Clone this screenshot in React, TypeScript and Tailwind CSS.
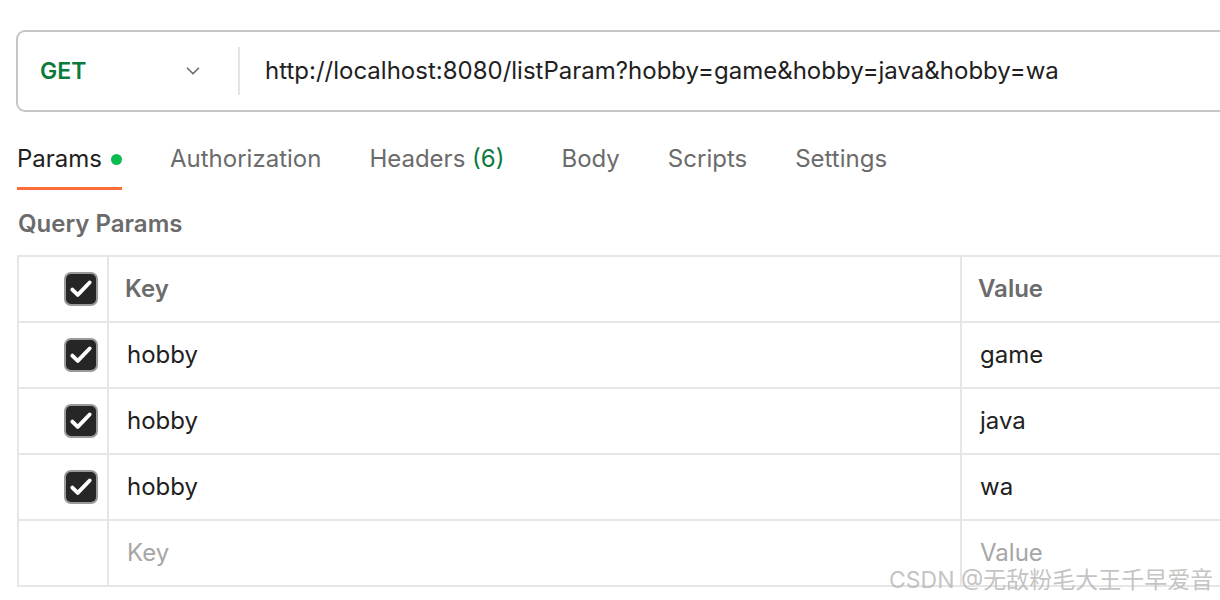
import { ChevronDown } from 'lucide-react';

const rows = [
  { key: 'hobby', value: 'game' },
  { key: 'hobby', value: 'java' },
  { key: 'hobby', value: 'wa' },
];

function Check() {
  return (
    <div className="w-[34px] h-[34px] rounded-[7px] bg-[#262626] border-2 border-[#9a9a9a] flex items-center justify-center">
      <svg width="26" height="26" viewBox="0 0 24 24" fill="none">
        <path d="M4 12.5l5 5L20 6" stroke="white" strokeWidth="3.6" strokeLinecap="round" strokeLinejoin="round" />
      </svg>
    </div>
  );
}

export default function App() {
  return (
    <div
      className="relative w-[1220px] h-[600px] bg-white overflow-hidden"
      style={{ fontFamily: 'Inter, "Noto Sans CJK SC", sans-serif' }}
    >
      {/* URL bar */}
      <div className="ml-[16px] mt-[30px] w-[1230px] h-[82px] border-2 border-[#c6c6c6] rounded-[9px] flex items-center">
        <div className="w-[220px] flex items-center justify-between pl-[22px] pr-[34px]">
          <span className="text-[23px] font-semibold text-[#0b7a3b]">GET</span>
          <ChevronDown className="w-[22px] h-[22px] text-[#6b6b6b]" strokeWidth={1.8} />
        </div>
        <div className="w-[2px] h-[48px] bg-[#e4e4e4]" />
        <span className="ml-[25px] text-[24px] text-[#212121]">
          http://localhost:8080/listParam?hobby=game&amp;hobby=java&amp;hobby=wa
        </span>
      </div>

      {/* Tabs */}
      <div className="flex items-start mt-[32px] ml-[17px] text-[24px] text-[#6b6b6b] leading-[30px]">
        <div className="flex flex-col w-[105px]">
          <div className="flex items-center gap-[9px] text-[#212121]">
            Params
            <span className="w-[11px] h-[11px] rounded-full bg-[#0cbb52]" />
          </div>
          <div className="mt-[13px] h-[3px] bg-[#ff6c37]" />
        </div>
        <span className="ml-[48px]">Authorization</span>
        <span className="ml-[48px]">
          Headers <span className="text-[#0b7a3b]">(6)</span>
        </span>
        <span className="ml-[57px]">Body</span>
        <span className="ml-[48px]">Scripts</span>
        <span className="ml-[48px]">Settings</span>
      </div>

      <div className="mt-[19px] ml-[18px] text-[24px] font-semibold text-[#6b6b6b] leading-[30px]">Query Params</div>

      {/* Table */}
      <div className="mt-[16px] ml-[17px] w-[1240px] border-2 border-[#e6e6e6] text-[24px]">
        <div className="flex h-[66px] border-b-2 border-[#e6e6e6]">
          <div className="w-[90px] border-r-2 border-[#e6e6e6] flex items-center justify-end pr-[9px]">
            <Check />
          </div>
          <div className="w-[853px] border-r-2 border-[#e6e6e6] flex items-center pl-[16px] font-semibold text-[#6b6b6b]">
            Key
          </div>
          <div className="flex-1 flex items-center pl-[16px] font-semibold text-[#6b6b6b]">Value</div>
        </div>
        {rows.map((r, i) => (
          <div key={i} className="flex h-[66px] border-b-2 border-[#e6e6e6]">
            <div className="w-[90px] border-r-2 border-[#e6e6e6] flex items-center justify-end pr-[9px]">
              <Check />
            </div>
            <div className="w-[853px] border-r-2 border-[#e6e6e6] flex items-center pl-[18px] text-[#212121]">
              {r.key}
            </div>
            <div className="flex-1 flex items-center pl-[18px] text-[#212121]">{r.value}</div>
          </div>
        ))}
        <div className="flex h-[64px]">
          <div className="w-[90px] border-r-2 border-[#e6e6e6]" />
          <div className="w-[853px] border-r-2 border-[#e6e6e6] flex items-center pl-[18px] text-[#a6a6a6]">Key</div>
          <div className="flex-1 flex items-center pl-[18px] text-[#a6a6a6]">Value</div>
        </div>
      </div>

      {/* Watermark */}
      <div className="absolute left-[889px] top-[565px] whitespace-nowrap text-[23px] leading-[30px] text-[#b4b4b4]/80">
        CSDN @无敌粉毛大王千早爱音
      </div>
    </div>
  );
}
